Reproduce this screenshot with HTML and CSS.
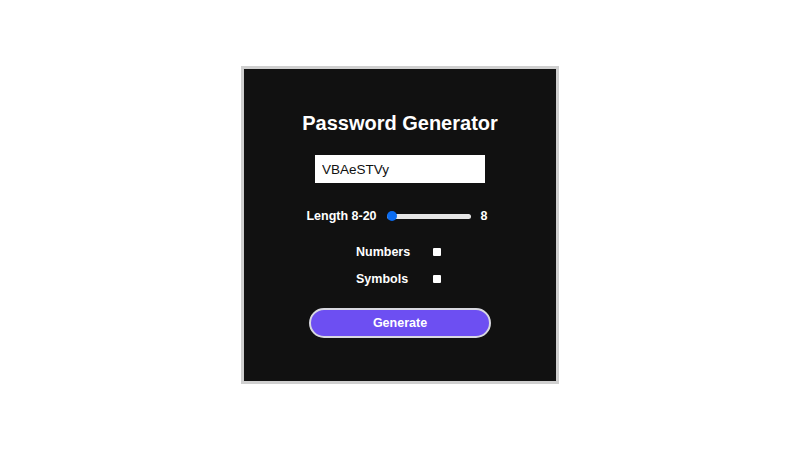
FILE: index.html
```html
<!DOCTYPE html>
<html>
<head>
	<title>Password Generator</title>
	<link rel="stylesheet" href="styles.css">
</head>
<body>
	<div class="card">
		<h1>Password Generator</h1>
		<input class="output" type="text" value="VBAeSTVy" readonly>

		<div class="length">
			<label for="length">Length 8-20</label>
			<input id="length" type="range" min=8 max=20 value=8>
			<span class="length-value">8</span>
		</div>

		<div class="options">
			<label for="numbers">Numbers</label>
			<input id="numbers" type="checkbox">
			<label for="symbols">Symbols</label>
			<input id="symbols" type="checkbox">
		</div>

		<button class="generate">Generate</button>
	</div>
</body>
</html>
```

FILE: styles.css
```css
/* general */
body {
	margin: 0;
	height: 100vh;
	display: flex;
	align-items: center;
	justify-content: center;
	background: #fff;
	font-family: "Liberation Sans", Arial, sans-serif;
}
.card {
	box-sizing: border-box;
	width: 318px;
	height: 318px;
	border: 3px solid #cfcfcf;
	background: #111;
	color: #fff;
	display: flex;
	flex-direction: column;
	align-items: center;
	padding-top: 41px;
}
h1 {
	margin: 0;
	font-size: 20px;
	line-height: 26px;
}
/* password field */
.output {
	box-sizing: border-box;
	margin-top: 19px;
	width: 170px;
	height: 28px;
	border: none;
	padding: 0 7px;
	font-family: inherit;
	font-size: 13.5px;
	color: #111;
	outline: none;
}
/* length slider */
.length {
	margin-top: 25px;
	height: 16px;
	display: flex;
	align-items: center;
	gap: 10px;
	font-size: 12.5px;
	font-weight: bold;
	margin-left: 2px;
}
.length input {
	appearance: none;
	width: 84px;
	height: 5px;
	margin: 0;
	border-radius: 3px;
	background: #e6e6e6;
}
.length input::-webkit-slider-thumb {
	appearance: none;
	width: 10px;
	height: 10px;
	border-radius: 50%;
	background: #0b6cf0;
}
.length-value {
	width: 15px;
}
/* checkboxes */
.options {
	margin-top: 20px;
	display: grid;
	grid-template-columns: 77px 8px;
	row-gap: 11px;
	align-items: center;
	font-size: 12.5px;
	font-weight: bold;
	line-height: 16px;
	margin-right: 3px;
}
.options input {
	appearance: none;
	width: 8px;
	height: 8px;
	margin: 0;
	background: #fff;
	border-radius: 1px;
}
/* button */
.generate {
	margin-top: 21px;
	width: 182px;
	height: 30px;
	border: 2px solid #d8d8e0;
	border-radius: 15px;
	background: #6d4ff2;
	color: #fff;
	font-family: inherit;
	font-size: 12.5px;
	font-weight: bold;
}
```
